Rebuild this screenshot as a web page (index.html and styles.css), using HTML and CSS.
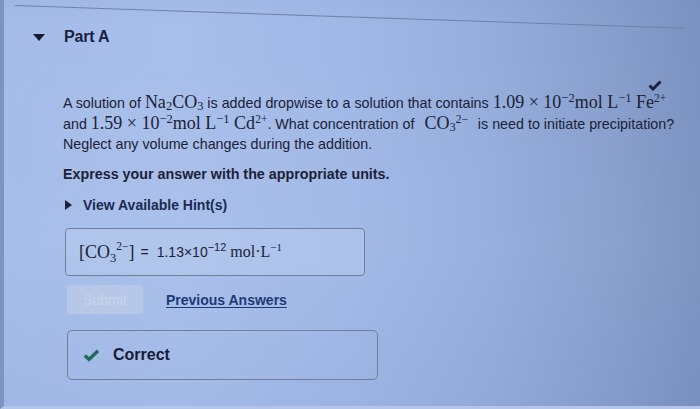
FILE: index.html
```html
<!DOCTYPE html>
<html lang="en">
<head>
<meta charset="utf-8">
<title>Part A</title>
<link rel="stylesheet" href="styles.css">
</head>
<body>
<div class="screen">
  <div class="topline"></div>
  <section class="part">
    <header class="part-head">
      <span class="tri-down"></span>
      <h2 class="part-title">Part A</h2>
    </header>
    <div class="status-row">
      <svg class="done-check" width="14" height="11" viewBox="0 0 14 11"><path d="M1.5 5.5 L5 9 L12.5 1.5" fill="none" stroke="#1d2442" stroke-width="3"/></svg>
    </div>
    <p class="question">A solution of <span class="m">Na<sub>2</sub>CO<sub>3</sub></span> is added dropwise to a solution that contains <span class="m">1.09 × 10<sup>−2</sup>mol L<sup>−1</sup> Fe<sup class="sm">2+</sup></span><br>and <span class="m">1.59 × 10<sup>−2</sup>mol L<sup>−1</sup> Cd<sup class="sm">2+</sup></span>. What concentration of <span class="m co">CO<sub>3</sub><sup class="sm">2−</sup></span> is need to initiate precipitation?<br>Neglect any volume changes during the addition.</p>
    <p class="express">Express your answer with the appropriate units.</p>
    <div class="hint"><span class="tri-right"></span>View Available Hint(s)</div>
    <div class="answer">
      <span class="m big">[CO<sub>3</sub><sup class="sm">2−</sup>]</span>
      <span class="eq">=</span>
      <span class="num">1.13×10<sup>−12</sup></span>
      <span class="m unit">mol·L<sup>−1</sup></span>
    </div>
    <div class="actions">
      <button class="submit" disabled>Submit</button>
      <a class="prev" href="#">Previous Answers</a>
    </div>
    <div class="feedback">
      <svg class="ok-check" width="17" height="13" viewBox="0 0 17 13"><path d="M1.8 6.5 L6 10.5 L15 1.8" fill="none" stroke="#1d6b57" stroke-width="3.4"/></svg>
      <span class="correct">Correct</span>
    </div>
  </section>
</div>
</body>
</html>
```

FILE: styles.css
```css
html, body {
  margin: 0;
  padding: 0;
}
body {
  width: 700px;
  height: 409px;
  overflow: hidden;
  font-family: "Liberation Sans", Arial, sans-serif;
  color: #1c2236;
}
.screen {
  width: 700px;
  height: 409px;
  box-sizing: border-box;
  border-left: 4px solid #7d93c0;
  border-bottom: 3px solid #b3c6ea;
  background:
    linear-gradient(180deg, rgba(120,140,190,0.10) 0%, rgba(120,140,190,0) 6%, rgba(255,255,255,0.03) 60%, rgba(90,110,160,0.06) 100%),
    linear-gradient(90deg, #a5bce9 0%, #a8bfeb 25%, #a0b8e6 50%, #94addc 70%, #879ecc 88%, #7a92c0 100%);
  overflow: hidden;
}
.topline {
  margin-left: 11px;
  width: 670px;
  height: 0;
  border-top: 1px solid #6f80a8;
  transform-origin: 0 0;
  transform: translateY(5px) rotate(1.95deg);
}
.part {
  padding-left: 25px;
}
.part-head {
  display: flex;
  align-items: center;
  margin-top: 26px;
  height: 20px;
}
.tri-down {
  width: 0;
  height: 0;
  border-left: 6px solid transparent;
  border-right: 6px solid transparent;
  border-top: 7px solid #161c30;
  margin-left: 4px;
  margin-right: 19px;
}
.part-title {
  margin: 0;
  font-size: 16px;
  font-weight: bold;
  color: #182140;
  letter-spacing: -0.2px;
}
.status-row {
  display: flex;
  justify-content: flex-end;
  padding-right: 38px;
  margin-top: 33px;
  height: 12px;
}
.question {
  margin: 0;
  margin-left: 34px;
  font-size: 14.3px;
  line-height: 20px;
  color: #1c2236;
}
.m {
  font-family: "Liberation Serif", "DejaVu Serif", serif;
  font-size: 18px;
}
.m sub, .m sup {
  font-size: 12.5px;
  line-height: 0;
}
.m sub { vertical-align: -2px; }
.m sup { vertical-align: 6px; }
.m sup.sm { font-size: 11.5px; }
.co { margin: 0 6px 0 6px; }
.express {
  margin: 10px 0 0 34px;
  font-size: 14.3px;
  font-weight: bold;
  line-height: 20px;
  color: #1c2236;
}
.hint {
  display: flex;
  align-items: center;
  margin: 11px 0 0 36px;
  font-size: 14px;
  font-weight: bold;
  color: #1c2a50;
  height: 20px;
}
.tri-right {
  width: 0;
  height: 0;
  border-top: 5px solid transparent;
  border-bottom: 5px solid transparent;
  border-left: 7px solid #1c2236;
  margin-right: 11px;
}
.answer {
  display: flex;
  align-items: center;
  width: 300px;
  height: 48px;
  box-sizing: border-box;
  margin: 13px 0 0 36px;
  padding-left: 13px;
  border: 1px solid #737e97;
  border-radius: 4px;
  background: rgba(190, 208, 242, 0.35);
}
.answer .big { font-size: 18px; }
.answer .big sub { vertical-align: -4px; }
.answer .big sup { vertical-align: 8px; }
.eq {
  font-size: 14px;
  margin: 0 8px 0 6px;
}
.num {
  font-size: 14px;
}
.num sup {
  font-size: 11px;
  line-height: 0;
  vertical-align: 6px;
}
.unit {
  font-size: 16px;
  margin-left: 4px;
}
.unit sup { font-size: 11px; vertical-align: 6px; }
.actions {
  display: flex;
  align-items: center;
  margin: 9px 0 0 38px;
  height: 29px;
}
.submit {
  width: 76px;
  height: 29px;
  border: none;
  border-radius: 2px;
  background: #b6c7e7;
  color: #cad4ea;
  font-family: "Liberation Sans", Arial, sans-serif;
  font-size: 14px;
  padding: 0;
}
.prev {
  margin-left: 23px;
  font-size: 14px;
  font-weight: bold;
  color: #1c3a78;
  text-decoration: underline;
  text-underline-offset: 2px;
}
.feedback {
  display: flex;
  align-items: center;
  width: 311px;
  height: 50px;
  box-sizing: border-box;
  margin: 16px 0 0 38px;
  padding-left: 15px;
  border: 1px solid #737e97;
  border-radius: 5px;
}
.correct {
  margin-left: 13px;
  font-size: 16px;
  font-weight: bold;
  color: #161c34;
}
```
